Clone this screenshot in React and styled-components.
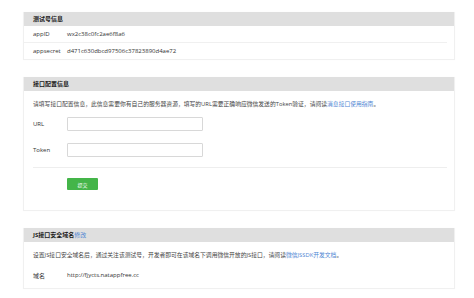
import React from "react";
import styled, { createGlobalStyle } from "styled-components";

const GlobalStyle = createGlobalStyle`
  body {
    margin: 0;
    background: #fff;
    font-family: "Open Sans", "Noto Sans", "Noto Sans CJK SC", sans-serif;
    color: #333;
  }
`;

const Page = styled.div`
  padding: 12px 19px 10px 23px;
  display: flex;
  flex-direction: column;
  gap: 17px;
`;

const Panel = styled.section`
  border: 1px solid #f0f0f0;
  border-top: none;
  background: #fff;
  box-shadow: 0 0 1px rgba(0, 0, 0, 0.04);
`;

const PanelHeader = styled.div`
  height: 14px;
  line-height: 14px;
  background: #dfdfdf;
  padding-left: 9px;
  font-size: 6px;
  font-weight: 700;
  color: #1a1a1a;
`;

const Link = styled.a`
  color: #4f86d3;
  text-decoration: none;
  font-weight: 400;
`;

const InfoRow = styled.div`
  display: flex;
  align-items: center;
  height: 16px;
  padding-left: 9px;
  margin-right: 7px;
  font-size: 6px;
  color: #333;
  border-bottom: ${(p) => (p.$last ? "none" : "1px solid #f0f0f0")};
`;

const Label = styled.span`
  width: 34px;
  flex-shrink: 0;
`;

const Body = styled.div`
  padding: 9px 7px 0 9px;
  font-size: 6px;
  color: #333;
`;

const Desc = styled.p`
  margin: 0;
  line-height: 8px;
  font-size: 5.8px;
  color: #444;
`;

const FieldRow = styled.div`
  display: flex;
  align-items: center;
  height: 14px;
  margin-top: ${(p) => p.$top}px;
  margin-bottom: ${(p) => p.$bottom || 0}px;
`;

const Input = styled.div`
  width: 134px;
  height: 12px;
  border: 1px solid #d8d8d8;
  border-radius: 1px;
  background: #fff;
`;

const Divider = styled.div`
  height: 1px;
  background: #eeeeee;
  margin-top: 10px;
`;

const Submit = styled.button`
  margin: 10px 0 20px 34px;
  width: 31px;
  height: 12px;
  border: none;
  border-radius: 1px;
  background: #44b549;
  color: #fff;
  font-size: 5px;
  font-family: inherit;
  padding: 0;
  display: block;
`;

export default function App() {
  return (
    <>
      <GlobalStyle />
      <Page>
        <Panel>
          <PanelHeader>测试号信息</PanelHeader>
          <InfoRow>
            <Label>appID</Label>
            <span>wx2c38c0fc2ae6f8a6</span>
          </InfoRow>
          <InfoRow $last>
            <Label>appsecret</Label>
            <span>d471c630dbcd97506c37823890d4ae72</span>
          </InfoRow>
        </Panel>

        <Panel>
          <PanelHeader>接口配置信息</PanelHeader>
          <Body>
            <Desc>
              请填写接口配置信息，此信息需要你有自己的服务器资源，填写的URL需要正确响应微信发送的Token验证，请阅读
              <Link>消息接口使用指南</Link>。
            </Desc>
            <FieldRow $top={9}>
              <Label>URL</Label>
              <Input />
            </FieldRow>
            <FieldRow $top={12}>
              <Label>Token</Label>
              <Input />
            </FieldRow>
            <Divider />
            <Submit>提交</Submit>
          </Body>
        </Panel>

        <Panel>
          <PanelHeader>
            JS接口安全域名<Link>修改</Link>
          </PanelHeader>
          <Body>
            <Desc>
              设置JS接口安全域名后，通过关注该测试号，开发者即可在该域名下调用微信开放的JS接口，请阅读
              <Link>微信JSSDK开发文档</Link>。
            </Desc>
            <FieldRow $top={9} $bottom={6}>
              <Label>域名</Label>
              <span>http://fjycts.natappfree.cc</span>
            </FieldRow>
          </Body>
        </Panel>
      </Page>
    </>
  );
}
